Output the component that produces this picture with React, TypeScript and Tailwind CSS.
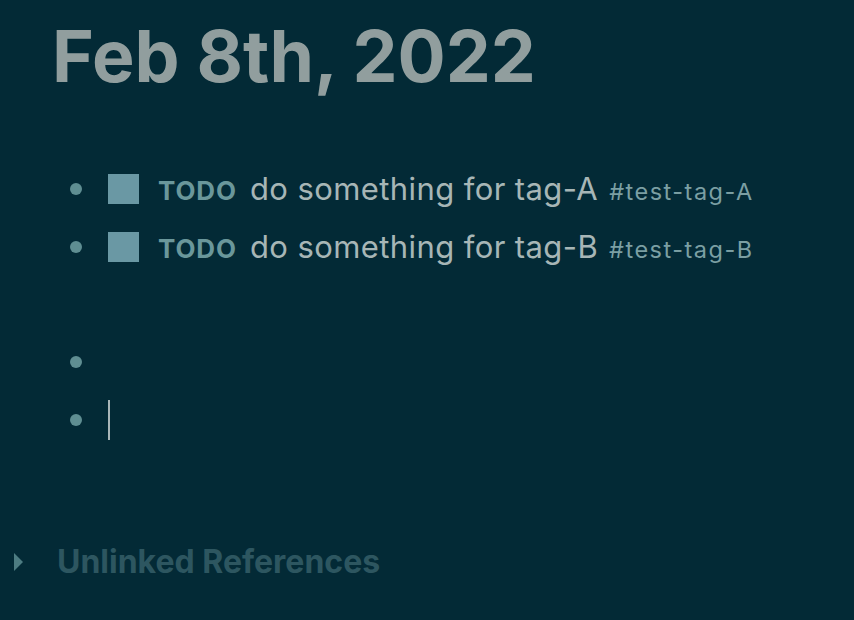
import { ReactNode } from 'react';

const Bullet = () => (
  <div className="w-[32px] flex justify-center shrink-0">
    <span className="block w-[12px] h-[12px] rounded-full bg-[#5f8e92]" />
  </div>
);

const Block = ({ children }: { children?: ReactNode }) => (
  <div className="flex items-center h-[58px]">
    <div className="w-[60px] shrink-0" />
    <Bullet />
    <div className="ml-[16px] flex items-center">{children}</div>
  </div>
);

const TodoItem = ({ text, tag }: { text: string; tag: string }) => (
  <div className="flex items-baseline">
    <span className="block w-[31px] h-[30px] bg-[#6a98a4] self-center" />
    <span className="ml-[19px] text-[26px] font-bold text-[#6a979b] tracking-[0.9px]">TODO</span>
    <span className="ml-[13px] text-[31px] text-[#a7b6b6] tracking-[0.4px]">{text}</span>
    <span className="ml-[11px] text-[23.5px] text-[#7b9fa3] tracking-[1.5px]">{tag}</span>
  </div>
);

export default function App() {
  return (
    <div
      className="w-[854px] h-[620px] bg-[#032a36] overflow-hidden"
      style={{ fontFamily: 'Inter, "Noto Sans", sans-serif' }}
    >
      <h1 className="pl-[52px] pt-[11px] text-[71.5px] leading-[90px] font-bold text-[#919e9e]">
        Feb 8th, 2022
      </h1>

      <div className="mt-[59px]">
        <Block>
          <TodoItem text="do something for tag-A" tag="#test-tag-A" />
        </Block>
        <Block>
          <TodoItem text="do something for tag-B" tag="#test-tag-B" />
        </Block>
        <div className="h-[57px]" />
        <Block />
        <Block>
          <span className="block w-[2px] h-[40px] bg-[#a9b6b8]" />
        </Block>
      </div>

      <div className="mt-[89px] flex items-center">
        <div className="w-[57px] pl-[13px] shrink-0">
          <svg width="11" height="20" viewBox="0 0 11 20">
            <path d="M1 1 L10 10 L1 19 Z" fill="#4d7c82" />
          </svg>
        </div>
        <span className="text-[32px] font-bold text-[#2d5660]">Unlinked References</span>
      </div>
    </div>
  );
}
